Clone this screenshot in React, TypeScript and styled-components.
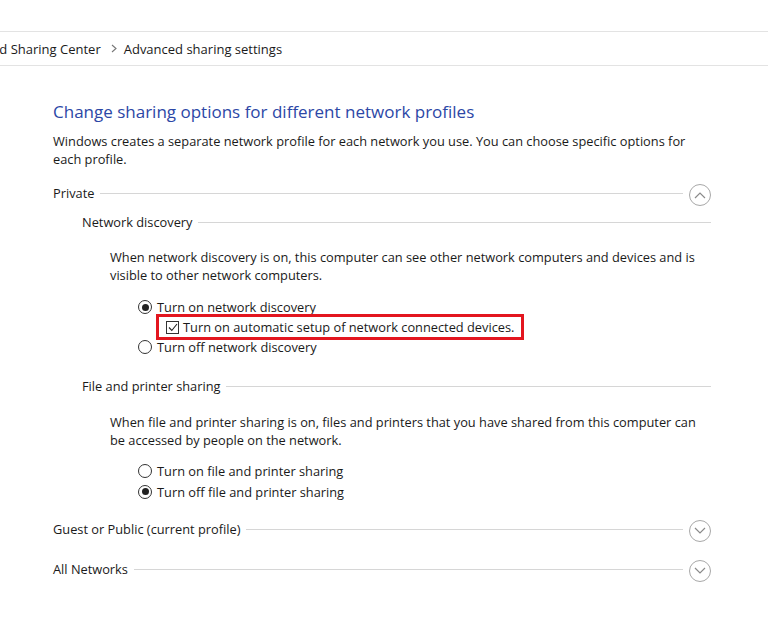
import * as React from 'react';
import styled, { createGlobalStyle } from 'styled-components';

const GlobalStyle = createGlobalStyle`
  body {
    margin: 0;
    background: #fff;
    font-family: "Open Sans", "Noto Sans", sans-serif;
    color: #1a1a1a;
  }
`;

const Page = styled.div`
  width: 768px;
  height: 633px;
  overflow: hidden;
  padding-top: 31px;
  box-sizing: border-box;
`;

const Breadcrumb = styled.nav`
  display: flex;
  align-items: center;
  height: 33px;
  border-top: 1px solid #e3e3e3;
  border-bottom: 1px solid #e3e3e3;
  overflow: hidden;
  font-size: 13px;
  white-space: nowrap;
`;

const Crumb = styled.span<{ $first?: boolean }>`
  margin-left: ${p => (p.$first ? '-71px' : '0')};
`;

const CrumbSep = styled.span`
  display: flex;
  align-items: center;
  padding: 0 7px 0 10px;
  color: #777;
`;

const Content = styled.main`
  padding: 34px 57px 0 53px;
`;

const Title = styled.h1`
  margin: 0;
  font-size: 17px;
  font-weight: 400;
  line-height: 24px;
  color: #2c47a6;
`;

const Para = styled.p<{ $indent?: number; $top?: number }>`
  margin: ${p => p.$top ?? 0}px 0 0;
  padding: 0 15px 0 ${p => p.$indent ?? 0}px;
  font-size: 12.8px;
  line-height: 18px;
`;

const Header = styled.div<{ $indent?: number; $top?: number }>`
  display: flex;
  align-items: center;
  height: 24px;
  margin-top: ${p => p.$top ?? 0}px;
  padding-left: ${p => p.$indent ?? 0}px;
  font-size: 12.8px;
  white-space: nowrap;
`;

const Rule = styled.div`
  flex: 1;
  height: 1px;
  margin-left: 6px;
  background: #d6d6d6;
`;

const ToggleButton = styled.button`
  display: flex;
  align-items: center;
  justify-content: center;
  width: 22px;
  height: 22px;
  margin: 3px 0 0 6px;
  padding: 0;
  border: 1px solid #a8a8a8;
  border-radius: 50%;
  background: #fff;
  color: #8a8a8a;
`;

const Options = styled.div<{ $top?: number }>`
  display: flex;
  flex-direction: column;
  margin-top: ${p => p.$top ?? 0}px;
  padding-left: 85px;
`;

const OptionRow = styled.label<{ $gap?: number; $height?: number }>`
  display: flex;
  align-items: center;
  gap: ${p => p.$gap ?? 5}px;
  height: ${p => p.$height ?? 20}px;
  font-size: 12.8px;
  white-space: nowrap;
`;

const Highlight = styled.div`
  align-self: flex-start;
  margin: -3px 0 -3px 18px;
  padding: 0 7px 0 7px;
  border: 3px solid #e3161f;
`;

const RadioMark = styled.span<{ $on?: boolean }>`
  position: relative;
  flex: none;
  width: 14px;
  height: 14px;
  box-sizing: border-box;
  border: 1px solid #333;
  border-radius: 50%;
  background: #fff;

  &::after {
    content: '';
    display: ${p => (p.$on ? 'block' : 'none')};
    position: absolute;
    inset: 2.5px;
    border-radius: 50%;
    background: #222;
  }
`;

const CheckMark = styled.span`
  display: flex;
  flex: none;
  align-items: center;
  justify-content: center;
  width: 13px;
  height: 13px;
  box-sizing: border-box;
  border: 1px solid #333;
  background: #fff;
`;

const Section = styled.section<{ $top?: number }>`
  margin-top: ${p => p.$top ?? 0}px;
`;

const Chevron = ({ up }: { up?: boolean }) => (
  <svg width="12" height="8" viewBox="0 0 12 8">
    <path
      d={up ? 'M1 7 L6 2 L11 7' : 'M1 1 L6 6 L11 1'}
      fill="none"
      stroke="currentColor"
      strokeWidth="1.2"
    />
  </svg>
);

const Radio = ({ on, height, children }: { on?: boolean; height?: number; children: React.ReactNode }) => (
  <OptionRow $height={height}>
    <RadioMark $on={on} />
    {children}
  </OptionRow>
);

export default function App() {
  return (
    <Page>
      <GlobalStyle />
      <Breadcrumb>
        <Crumb $first>Network and Sharing Center</Crumb>
        <CrumbSep>
          <svg width="6" height="9" viewBox="0 0 6 9">
            <path d="M1 1 L5 4.5 L1 8" fill="none" stroke="currentColor" strokeWidth="1.1" />
          </svg>
        </CrumbSep>
        <Crumb>Advanced sharing settings</Crumb>
      </Breadcrumb>

      <Content>
        <Title>Change sharing options for different network profiles</Title>
        <Para $top={8}>
          Windows creates a separate network profile for each network you use. You can choose specific options for
          each profile.
        </Para>

        <Section $top={13}>
          <Header>
            Private
            <Rule />
            <ToggleButton aria-label="Collapse">
              <Chevron up />
            </ToggleButton>
          </Header>

          <Header $indent={29} $top={5}>
            Network discovery
            <Rule />
          </Header>
          <Para $indent={57} $top={14}>
            When network discovery is on, this computer can see other network computers and devices and is
            visible to other network computers.
          </Para>
          <Options $top={13}>
            <Radio on>Turn on network discovery</Radio>
            <Highlight>
              <OptionRow $gap={4}>
                <CheckMark>
                  <svg width="10" height="9" viewBox="0 0 10 9">
                    <path d="M1 4.5 L3.8 7.5 L9 1" fill="none" stroke="#222" strokeWidth="1.1" />
                  </svg>
                </CheckMark>
                Turn on automatic setup of network connected devices.
              </OptionRow>
            </Highlight>
            <Radio>Turn off network discovery</Radio>
          </Options>

          <Header $indent={29} $top={17}>
            File and printer sharing
            <Rule />
          </Header>
          <Para $indent={57} $top={15}>
            When file and printer sharing is on, files and printers that you have shared from this computer can
            be accessed by people on the network.
          </Para>
          <Options $top={11}>
            <Radio height={21}>Turn on file and printer sharing</Radio>
            <Radio on height={21}>Turn off file and printer sharing</Radio>
          </Options>
        </Section>

        <Section $top={15}>
          <Header>
            Guest or Public (current profile)
            <Rule />
            <ToggleButton aria-label="Expand">
              <Chevron />
            </ToggleButton>
          </Header>
        </Section>
        <Section $top={16}>
          <Header>
            All Networks
            <Rule />
            <ToggleButton aria-label="Expand">
              <Chevron />
            </ToggleButton>
          </Header>
        </Section>
      </Content>
    </Page>
  );
}
